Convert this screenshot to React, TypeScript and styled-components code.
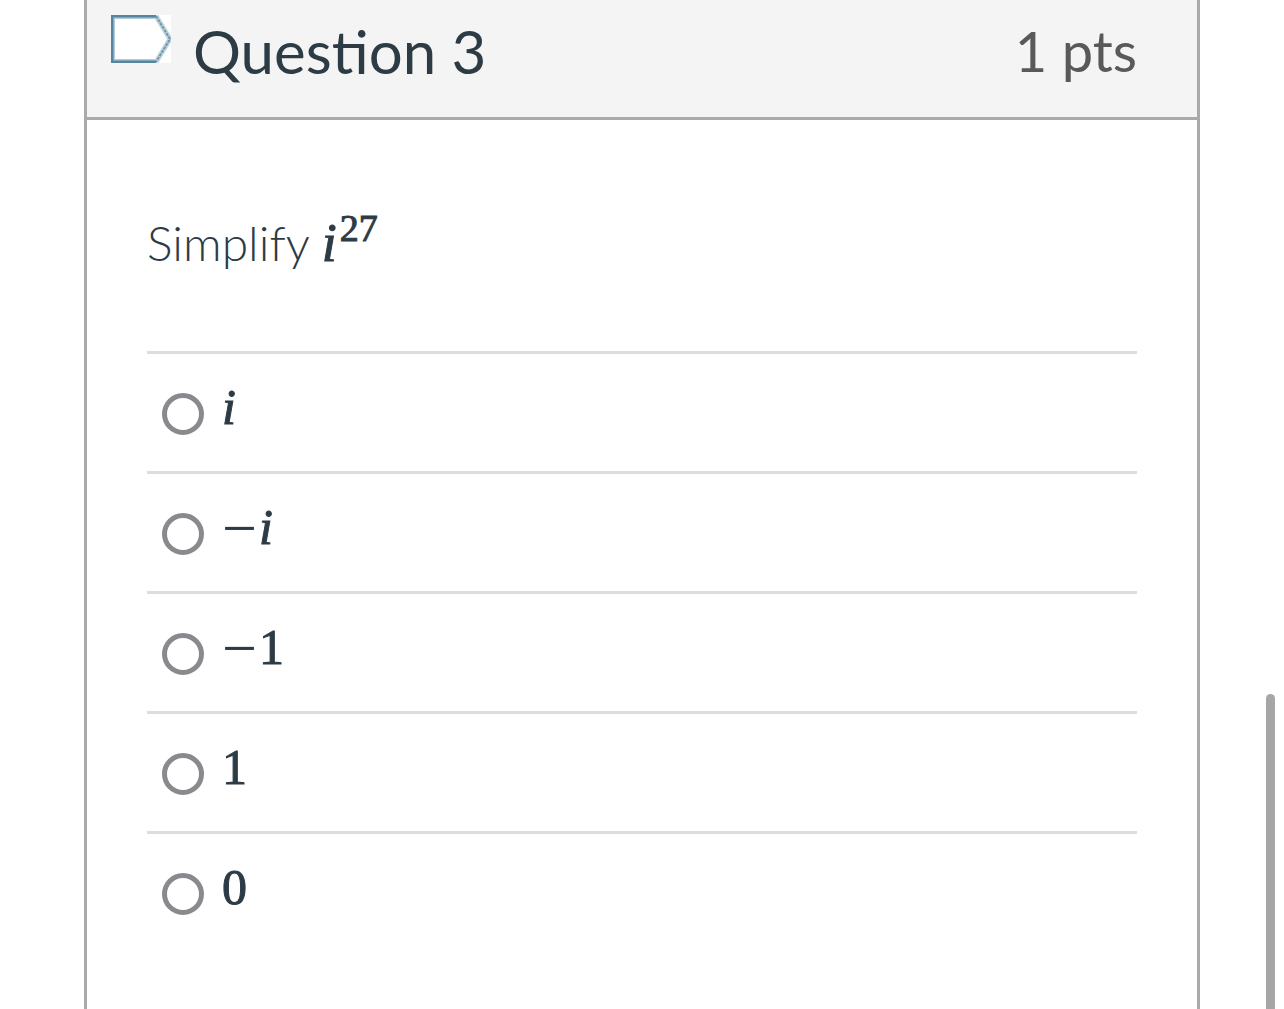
import React, { useState } from "react";
import styled, { createGlobalStyle } from "styled-components";

const GlobalStyle = createGlobalStyle`
  *, *::before, *::after { box-sizing: border-box; }
  body {
    margin: 0;
    background: #fff;
    color: #2d3b45;
    font-family: Lato, "Liberation Sans", sans-serif;
  }
`;

const Page = styled.main`
  display: flex;
  min-height: 100vh;
  padding: 0 84px;
`;

const Card = styled.section`
  flex: 1;
  min-width: 0;
  border: solid #aaa;
  border-width: 0 3px;
`;

const Header = styled.header`
  display: flex;
  align-items: flex-start;
  height: 120px;
  padding: 15px 60px 0 24px;
  background: #f4f4f4;
  border-bottom: 3px solid #aaa;
`;

const FlagButton = styled.button`
  display: flex;
  margin: 0 22px 0 0;
  padding: 0;
  border: 0;
  background: #fff;
  cursor: pointer;
`;

const Title = styled.h1`
  flex: 1;
  margin: 0;
  font-size: 60px;
  line-height: 72px;
  font-weight: 400;
`;

const Points = styled.span`
  color: #595959;
  font-size: 56px;
  line-height: 72px;
`;

const Body = styled.div`
  padding: 87px 60px 0;
`;

const Prompt = styled.p`
  margin: 0;
  height: 144px;
  font-size: 48px;
  line-height: 72px;
  font-weight: 300;
`;

const MathText = styled.span<{ $italic?: boolean; $size?: number }>`
  font-family: "Liberation Serif", serif;
  font-size: ${(p) => p.$size ?? 50}px;
  font-style: ${(p) => (p.$italic ? "italic" : "normal")};
  font-weight: 400;
  line-height: 60px;
  -webkit-text-stroke: 1px currentColor;
`;

const Exponent = styled.sup`
  margin-left: 3px;
  font-size: 38px;
  font-style: normal;
  line-height: 0;
  vertical-align: 20px;
`;

const Minus = styled.span`
  margin-right: 2px;
  font-family: "Liberation Serif", serif;
  font-size: 62px;
  line-height: 0;
  vertical-align: -5px;
`;

const Answers = styled.fieldset`
  min-width: 0;
  margin: 0;
  padding: 0;
  border: 0;
`;

const Answer = styled.label`
  display: flex;
  align-items: flex-start;
  gap: 18px;
  height: 120px;
  padding: 23px 15px 0;
  border-top: 3px solid #ddd;
  cursor: pointer;
`;

const Radio = styled.input`
  appearance: none;
  flex: none;
  width: 42px;
  height: 42px;
  margin: 16px 0 0;
  border: 5px solid #8a8a8e;
  border-radius: 50%;
  background: #fff;

  &:checked {
    border: 12px solid #0374b5;
  }
`;

const ScrollThumb = styled.div`
  position: fixed;
  top: 694px;
  right: 9px;
  bottom: -9px;
  width: 9px;
  border-radius: 5px;
  background: #a6a6a6;
`;

const answers = [
  { id: "i", negative: false, value: "i", italic: true },
  { id: "neg-i", negative: true, value: "i", italic: true },
  { id: "neg-1", negative: true, value: "1", italic: false },
  { id: "one", negative: false, value: "1", italic: false },
  { id: "zero", negative: false, value: "0", italic: false },
];

function FlagIcon() {
  return (
    <svg width="60" height="48" viewBox="0 0 60 48" fill="none" aria-hidden="true">
      <path d="M45 3H3V45H45" stroke="#b4cad6" strokeWidth="2" />
      <path d="M45 1L59 24L45 47" stroke="#c3d5de" strokeWidth="5" />
      <path d="M45 1L59 24L45 47" stroke="#6f98ae" strokeWidth="2" strokeDasharray="3 1" />
      <path d="M45 1H1V47H45" stroke="#5685a0" strokeWidth="3" />
    </svg>
  );
}

export default function App() {
  const [selected, setSelected] = useState("");

  return (
    <>
      <GlobalStyle />
      <Page>
        <Card>
          <Header>
            <FlagButton type="button" aria-label="Flag question">
              <FlagIcon />
            </FlagButton>
            <Title>Question 3</Title>
            <Points>1 pts</Points>
          </Header>
          <Body>
            <Prompt id="prompt">
              Simplify{" "}
              <MathText $italic $size={54}>
                i<Exponent>27</Exponent>
              </MathText>
            </Prompt>
            <Answers aria-labelledby="prompt">
              {answers.map((a) => (
                <Answer key={a.id} htmlFor={a.id}>
                  <Radio
                    type="radio"
                    name="answer"
                    id={a.id}
                    checked={selected === a.id}
                    onChange={() => setSelected(a.id)}
                  />
                  <span>
                    {a.negative && <Minus>−</Minus>}
                    <MathText $italic={a.italic}>{a.value}</MathText>
                  </span>
                </Answer>
              ))}
            </Answers>
          </Body>
        </Card>
      </Page>
      <ScrollThumb />
    </>
  );
}
